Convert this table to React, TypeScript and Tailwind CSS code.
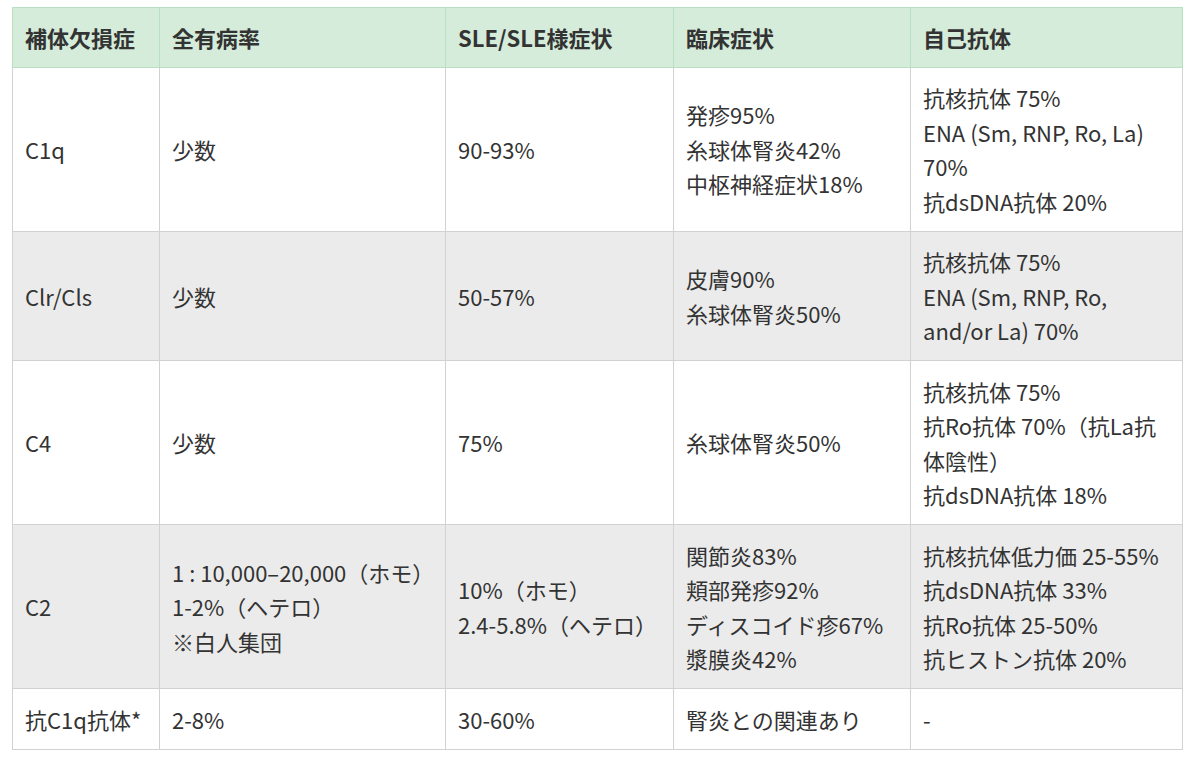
import React from 'react';

type Row = { cells: string[][]; shaded: boolean };

const headers = ["補体欠損症", "全有病率", "SLE/SLE様症状", "臨床症状", "自己抗体"];

const rows: Row[] = [
  {
    shaded: false,
    cells: [
      ["C1q"],
      ["少数"],
      ["90-93%"],
      ["発疹95%", "糸球体腎炎42%", "中枢神経症状18%"],
      ["抗核抗体 75%", "ENA (Sm, RNP, Ro, La) 70%", "抗dsDNA抗体 20%"],
    ],
  },
  {
    shaded: true,
    cells: [
      ["Clr/Cls"],
      ["少数"],
      ["50-57%"],
      ["皮膚90%", "糸球体腎炎50%"],
      ["抗核抗体 75%", "ENA (Sm, RNP, Ro, and/or La) 70%"],
    ],
  },
  {
    shaded: false,
    cells: [
      ["C4"],
      ["少数"],
      ["75%"],
      ["糸球体腎炎50%"],
      ["抗核抗体 75%", "抗Ro抗体 70%（抗La抗体陰性）", "抗dsDNA抗体 18%"],
    ],
  },
  {
    shaded: true,
    cells: [
      ["C2"],
      ["1 : 10,000–20,000（ホモ）", "1-2%（ヘテロ）", "※白人集団"],
      ["10%（ホモ）", "2.4-5.8%（ヘテロ）"],
      ["関節炎83%", "頬部発疹92%", "ディスコイド疹67%", "漿膜炎42%"],
      ["抗核抗体低力価 25-55%", "抗dsDNA抗体 33%", "抗Ro抗体 25-50%", "抗ヒストン抗体 20%"],
    ],
  },
  {
    shaded: false,
    cells: [["抗C1q抗体*"], ["2-8%"], ["30-60%"], ["腎炎との関連あり"], ["-"]],
  },
];

const widths = ["w-[147px]", "w-[286px]", "w-[228px]", "w-[237px]", "w-[272px]"];

export default function App() {
  return (
    <div
      className="min-h-screen bg-white pt-[7px] pl-[12px] text-[#333333]"
      style={{ fontFamily: '"Noto Sans CJK JP", "Noto Sans", sans-serif' }}
    >
      <table className="table-fixed w-[1170px] border-collapse text-[22px] leading-[34.5px]">
        <colgroup>
          {widths.map((w, i) => (
            <col key={i} className={w} />
          ))}
        </colgroup>
        <thead>
          <tr className="bg-[#d4ecd9]">
            {headers.map((h) => (
              <th
                key={h}
                className="border border-[#b9e0c2] px-[12px] py-[12px] text-left font-bold align-middle"
              >
                {h}
              </th>
            ))}
          </tr>
        </thead>
        <tbody>
          {rows.map((row, ri) => (
            <tr key={ri} className={row.shaded ? "bg-[#ebebeb]" : "bg-white"}>
              {row.cells.map((lines, ci) => (
                <td
                  key={ci}
                  className="border border-[#d2d2d2] px-[12px] py-[12.5px] align-middle"
                >
                  {lines.map((l, li) => (
                    <div key={li}>{l}</div>
                  ))}
                </td>
              ))}
            </tr>
          ))}
        </tbody>
      </table>
    </div>
  );
}
